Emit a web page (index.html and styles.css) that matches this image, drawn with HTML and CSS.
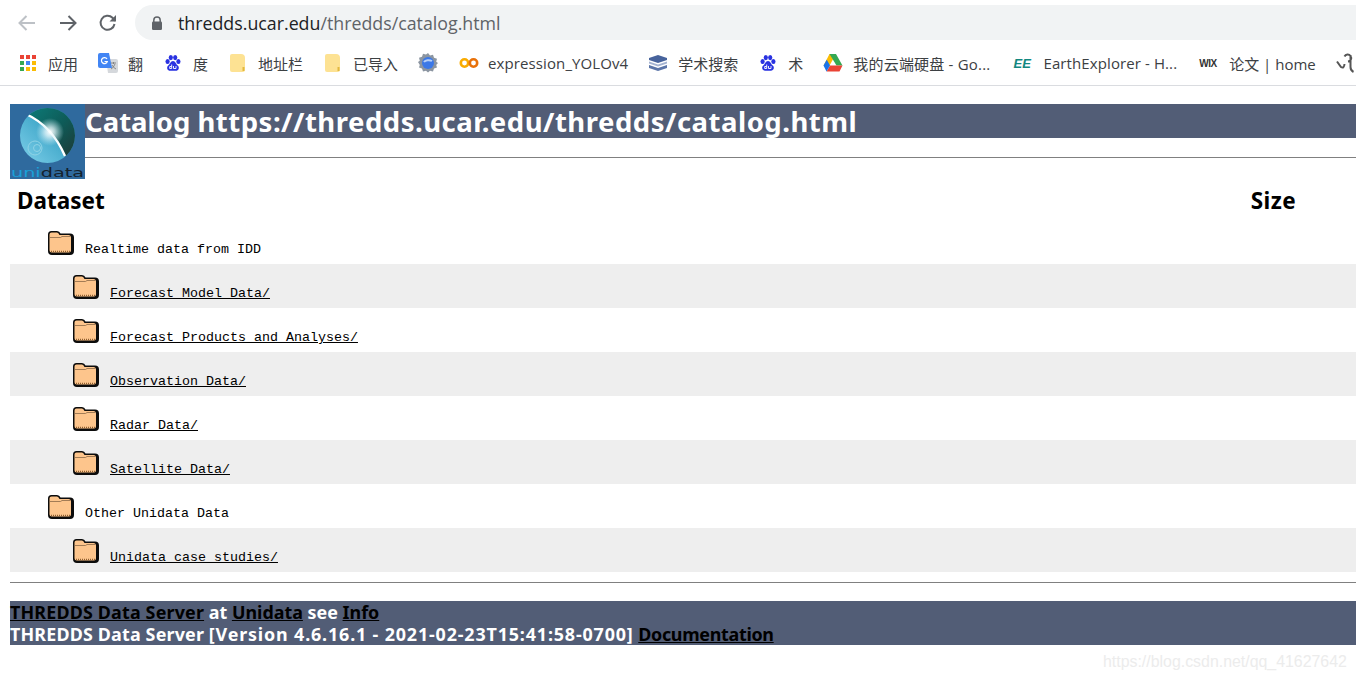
FILE: index.html
```html
<!DOCTYPE html>
<html lang="en">
<head>
<meta charset="utf-8">
<title>Catalog https://thredds.ucar.edu/thredds/catalog.html</title>
<link rel="stylesheet" href="styles.css">
</head>
<body>
<svg class="defs" width="0" height="0" aria-hidden="true">
  <defs>
    <symbol id="folder" viewBox="0 0 26 24">
      <path d="M0 7V3.500Q0 0 3.500 0H9Q11.500 0 12.500 2.500H22Q26 2.500 26 6.500V20Q26 24 22 24H4Q0 24 0 20Z" fill="#0c0c0c"/>
      <path d="M1.500 6.500V3.500Q1.500 1.500 3.500 1.500H9Q10.500 1.500 11.500 4H20.500Q23 4 23 6.500V19.500Q23 21.500 21 21.500H4Q1.500 21.500 1.500 19Z" fill="#fdc58c"/>
      <path d="M2 6.500H12.500L14 5.500H22.500" fill="none" stroke="#8c6a48" stroke-width=".8"/>
      <path d="M3 20.500H22" stroke="#8f5f30" stroke-width="1.500" stroke-dasharray="1 1"/>
    </symbol>
    <symbol id="paw" viewBox="0 0 16 16">
      <g fill="#2932e1">
        <ellipse cx="2.600" cy="6.500" rx="2.100" ry="2.600"/>
        <ellipse cx="5.800" cy="2.600" rx="2.100" ry="2.600"/>
        <ellipse cx="10.200" cy="2.600" rx="2.100" ry="2.600"/>
        <ellipse cx="13.400" cy="6.500" rx="2.100" ry="2.600"/>
        <path d="M8 6C10.500 6 10.800 9 12.800 10.500C15 12.500 13.500 16 10.500 15.800C9 15.600 7 15.600 5.500 15.800C2.500 16 1 12.500 3.200 10.500C5.200 9 5.500 6 8 6Z"/>
      </g>
      <path d="M6.700 9.500v4h-2v-2h2M8.500 11v2.500h2.500v-2.500" fill="none" stroke="#fff" stroke-width=".9"/>
    </symbol>
    <symbol id="file" viewBox="0 0 16 18">
      <path d="M0 2Q0 0 2 0H11Q15 0 15 4V15.500Q15 18 12.500 18H2Q0 18 0 16Z" fill="#fde293"/>
      <path d="M13.500 13v4" stroke="#e2b93f" stroke-width="2"/>
    </symbol>
  </defs>
</svg>

<header class="chrome">
  <div class="toolbar">
    <svg class="nav" viewBox="0 0 20 20"><path d="M18 10H3M9.500 3L2.500 10L9.500 17" fill="none" stroke="#bdc1c6" stroke-width="2"/></svg>
    <svg class="nav" viewBox="0 0 20 20"><path d="M2 10H17M10.500 3L17.500 10L10.500 17" fill="none" stroke="#5f6368" stroke-width="2"/></svg>
    <svg class="nav" viewBox="0 0 20 20"><path d="M16.500 11A7 7 0 1 1 14.500 4.800L17 7.800" fill="none" stroke="#5f6368" stroke-width="2"/><path d="M18 2V8.500H11.500Z" fill="#5f6368"/></svg>
    <div class="omnibox">
      <svg class="lock" viewBox="0 0 12 14"><path d="M2.800 6V4.200A3.200 3.200 0 0 1 9.200 4.200V6" fill="none" stroke="#5f6368" stroke-width="1.500"/><rect x="1" y="5.500" width="10" height="8.500" rx="1.200" fill="#5f6368"/></svg>
      <span class="url"><span class="host">thredds.ucar.edu</span>/thredds/catalog.html</span>
    </div>
  </div>
  <nav class="bookmarks">
    <a class="bm tight">
      <svg class="bi" viewBox="0 0 16 16"><g><rect x="0" y="0" width="4" height="4" fill="#ea4335"/><rect x="6" y="0" width="4" height="4" fill="#ea4335"/><rect x="12" y="0" width="4" height="4" fill="#ea4335"/><rect x="0" y="6" width="4" height="4" fill="#34a853"/><rect x="6" y="6" width="4" height="4" fill="#4285f4"/><rect x="12" y="6" width="4" height="4" fill="#fbbc04"/><rect x="0" y="12" width="4" height="4" fill="#34a853"/><rect x="6" y="12" width="4" height="4" fill="#fbbc04"/><rect x="12" y="12" width="4" height="4" fill="#fbbc04"/></g></svg>
      <span>应用</span>
    </a>
    <a class="bm bm-wide loose">
      <svg class="bi" viewBox="0 0 20 20"><path d="M8 6H18Q20 6 20 8V18Q20 20 18 20H10Z" fill="#d5d8dc"/><path d="M2 0H11L14 15H2Q0 15 0 13V2Q0 0 2 0Z" fill="#4285f4"/><path d="M9 6A3 3 0 1 0 9.300 8.500H6.500" fill="none" stroke="#fff" stroke-width="1.200"/><path d="M13 10h5M15.500 9v2M17 11q-1.500 4-4 5M14 12q1.500 3 4 4" fill="none" stroke="#777" stroke-width=".8"/></svg>
      <span>翻</span>
    </a>
    <a class="bm bm-tall loose"><svg class="bi"><use href="#paw"/></svg><span>度</span></a>
    <a class="bm bm-tall loose"><svg class="bi"><use href="#file"/></svg><span>地址栏</span></a>
    <a class="bm bm-tall tight"><svg class="bi"><use href="#file"/></svg><span>已导入</span></a>
    <a class="bm bm-wide">
      <svg class="bi" viewBox="0 0 20 20"><path d="M10 0l2 2.500 3-.8 1 3 3 1-.8 3 1.800 1.300-1.800 2 .8 2.500-3 1-1 3-3-.8-2 1.800-2-1.800-3 .8-1-3-3-1 .8-2.500L0 9l1.800-1.300L1 4.700l3-1 1-3 3 .8Z" fill="#8b95a1"/><circle cx="10" cy="10" r="6" fill="#3b78e7"/><path d="M6 9a5 3 0 0 1 8-1" stroke="#b7d0f7" stroke-width="2" fill="none"/></svg>
    </a>
    <a class="bm bm-colab latin">
      <svg class="bi" viewBox="0 0 20 12"><circle cx="5.500" cy="6" r="3.700" fill="none" stroke="#f9ab00" stroke-width="2.600"/><circle cx="14.500" cy="6" r="3.700" fill="none" stroke="#e8710a" stroke-width="2.600"/></svg>
      <span>expression_YOLOv4</span>
    </a>
    <a class="bm bm-stack loose">
      <svg class="bi" viewBox="0 0 18 16"><path d="M9 0L18 3V5L9 8L0 5V3Z" fill="#47639c"/><path d="M0 6.500L9 9.500L18 6.500V8.500L9 11.500L0 8.500Z" fill="#a5b4d2"/><path d="M0 10L9 13L18 10V13L9 16L0 13Z" fill="#5b75a8"/></svg>
      <span>学术搜索</span>
    </a>
    <a class="bm bm-tall tight"><svg class="bi"><use href="#paw"/></svg><span>术</span></a>
    <a class="bm bm-drive latin loose2">
      <svg class="bi" viewBox="0 0 20 18"><path d="M6.500 0H13L6.500 11.500H0.500Z" fill="#fbbc04"/><path d="M6.500 0H13L19.500 11.500H13.500Z" fill="#34a853"/><path d="M7 11.500H19.500L16.500 17.500H3.500Z" fill="#ea4335"/><path d="M0.500 11.500L3.500 17.500L7 11.500L3.800 5.800Z" fill="#1a73e8"/></svg>
      <span>我的云端硬盘 - Go...</span>
    </a>
    <a class="bm latin loose"><span class="ee">EE</span><span>EarthExplorer - H...</span></a>
    <a class="bm bm-wix tight"><span class="wix">WIX</span><span>论文 | home</span></a>
    <a class="bm bm-last">
      <svg class="bi" viewBox="0 0 18 20"><path d="M1 8.500L5 14Q8 16 8.500 11M8.500 3.500A3.500 3.500 0 1 1 12 8.500M14.500 2V14Q14.500 17.500 17.500 19" fill="none" stroke="#555" stroke-width="2"/></svg>
    </a>
  </nav>
</header>

<main class="page">
  <div class="head">
    <svg class="logo" viewBox="0 0 75 75">
      <defs>
        <linearGradient id="disc" x1="0" y1="1" x2="1" y2="0">
          <stop offset="0" stop-color="#7fd0ea"/>
          <stop offset=".6" stop-color="#3ea6c8"/>
          <stop offset="1" stop-color="#1b8fa6"/>
        </linearGradient>
        <linearGradient id="night" x1="0" y1="0" x2="1" y2="1">
          <stop offset="0" stop-color="#0c7f7c"/>
          <stop offset=".5" stop-color="#0e5b58"/>
          <stop offset="1" stop-color="#22302c"/>
        </linearGradient>
        <radialGradient id="flare">
          <stop offset="0" stop-color="#fff"/>
          <stop offset=".35" stop-color="#e6f6fa" stop-opacity=".75"/>
          <stop offset="1" stop-color="#bfe8f2" stop-opacity="0"/>
        </radialGradient>
        <clipPath id="disc-clip"><circle cx="37.500" cy="31.500" r="27.500"/></clipPath>
      </defs>
      <rect width="75" height="75" fill="#2f6a9e"/>
      <g clip-path="url(#disc-clip)">
        <rect x="10" y="4" width="55" height="55" fill="url(#disc)"/>
        <path d="M15 10Q42 22 56 53L70 60V0H15Z" fill="url(#night)"/>
        <path d="M16 10Q42 22 55 52" fill="none" stroke="#fff" stroke-width="2.400"/>
      </g>
      <circle cx="40" cy="28" r="14" fill="url(#flare)"/>
      <circle cx="25" cy="44" r="7" fill="none" stroke="#8fd3e6" stroke-width="1"/>
      <circle cx="27" cy="44" r="3.500" fill="none" stroke="#8fd3e6" stroke-width="1"/>
      <text class="logo-text" x="1" y="73" textLength="73" lengthAdjust="spacingAndGlyphs"><tspan class="uni">uni</tspan><tspan class="data">data</tspan></text>
    </svg>
    <div class="head-main">
      <h1>Catalog <span class="h1-url">https://thredds.ucar.edu/thredds/catalog.html</span></h1>
      <hr class="rule">
    </div>
  </div>

  <div class="table-head"><span>Dataset</span><span class="size">Size</span></div>

  <div class="row lvl1"><svg class="folder"><use href="#folder"/></svg><span class="name">Realtime data from IDD</span></div>
  <div class="row lvl2 alt"><svg class="folder"><use href="#folder"/></svg><a class="name link">Forecast Model Data/</a></div>
  <div class="row lvl2"><svg class="folder"><use href="#folder"/></svg><a class="name link">Forecast Products and Analyses/</a></div>
  <div class="row lvl2 alt"><svg class="folder"><use href="#folder"/></svg><a class="name link">Observation Data/</a></div>
  <div class="row lvl2"><svg class="folder"><use href="#folder"/></svg><a class="name link">Radar Data/</a></div>
  <div class="row lvl2 alt"><svg class="folder"><use href="#folder"/></svg><a class="name link">Satellite Data/</a></div>
  <div class="row lvl1"><svg class="folder"><use href="#folder"/></svg><span class="name">Other Unidata Data</span></div>
  <div class="row lvl2 alt"><svg class="folder"><use href="#folder"/></svg><a class="name link">Unidata case studies/</a></div>

  <hr class="rule foot-rule">

  <footer class="foot">
    <div><a class="tds">THREDDS Data Server</a> at <a>Unidata</a> see <a>Info</a></div>
    <div><span class="tds">THREDDS Data Server</span> <span class="ver">[Version 4.6.16.1 - 2021-02-23T15:41:58-0700]</span> <a class="docs">Documentation</a></div>
  </footer>
</main>
<div class="watermark">https://blog.csdn.net/qq_41627642</div>
</body>
</html>
```

FILE: styles.css
```css
* { box-sizing: border-box; }
html, body { margin: 0; padding: 0; height: 681px; overflow: hidden; background: #fff; }
body { font-family: "Open Sans", "Noto Sans CJK SC", sans-serif; color: #000; }
.defs { display: block; height: 0; }

.chrome { height: 86px; border-bottom: 1px solid #dadce0; overflow: hidden; }
.toolbar { display: flex; align-items: center; height: 45px; padding: 5px 0 5px 17px; }
.nav { width: 20px; height: 20px; flex: none; margin-right: 20.500px; }
.nav:nth-child(3) { margin-right: 17px; }
.omnibox { flex: 1; height: 35px; margin-right: -30px; background: #f1f3f4; border-radius: 18px; display: flex; align-items: center; padding-left: 16px; }
.lock { width: 12px; height: 14px; flex: none; margin-right: 15px; }
.url { font-size: 17.800px; color: #5f6368; white-space: nowrap; }
.host { color: #202124; }

.bookmarks { display: flex; align-items: center; gap: 21px; height: 36px; padding: 0 0 0 20px; white-space: nowrap; font-size: 15px; color: #3c4043; }
.bm { display: flex; align-items: center; gap: 12px; flex: none; }
.bi { width: 16px; height: 16px; flex: none; }
.tight { margin-right: -1px; }
.loose { margin-right: 1px; }
.loose2 { margin-right: 2px; }
.latin { letter-spacing: .1px; }
.bm-tall .bi { height: 18px; }
.bm-wide { gap: 10px; }
.bm-wide .bi { width: 20px; height: 20px; }
.bm-colab { gap: 9px; }
.bm-colab .bi { width: 20px; height: 12px; }
.bm-stack { gap: 11px; }
.bm-stack .bi { width: 18px; }
.bm-drive { gap: 10px; letter-spacing: .2px; }
.bm-drive .bi { width: 20px; height: 18px; }
.bm-last .bi { width: 18px; height: 20px; }
.ee { width: 18px; font: italic 700 13px "Liberation Sans", sans-serif; color: #12877f; }
.wix { width: 20px; font: 700 10px "Liberation Sans", sans-serif; color: #333; letter-spacing: -.5px; }
.bm-wix { gap: 10px; }

.page { padding: 18px 0 0 10px; font-family: "Noto Sans", sans-serif; }
.head { display: flex; height: 76px; }
.logo { width: 75px; height: 75px; flex: none; }
.logo-text { font: 400 12px "DejaVu Sans", sans-serif; }
.uni { fill: #1aa0d8; }
.data { fill: #14222e; }
.head-main { flex: 1; min-width: 0; }
h1 { margin: 0; height: 34px; line-height: 36px; font-size: 27.500px; font-weight: 700; color: #fff; background: #525d76; white-space: nowrap; }
.h1-url { letter-spacing: .5px; }
.rule { height: 1px; border: 0; margin: 19px 0 0; background: #808080; }

.table-head { display: flex; justify-content: space-between; align-items: center; height: 40px; padding: 0 60px 0 7px; font-size: 22.500px; font-weight: 700; }
.size { letter-spacing: .4px; }
.row { display: flex; height: 44px; padding-top: 11px; }
.alt { background: #eee; }
.lvl1 { padding-left: 38px; }
.lvl2 { padding-left: 63px; }
.folder { width: 26px; height: 24px; flex: none; margin-right: 11px; }
.name { font: 13.333px/16px "Liberation Mono", monospace; white-space: pre; color: #000; padding-top: 11px; height: 28px; }
.link { text-decoration: underline; }

.foot-rule { margin: 10px 0 0; }
.foot { margin-top: 18px; height: 44px; background: #525d76; color: #fff; font-size: 17.900px; font-weight: 700; line-height: 22px; white-space: nowrap; }
.foot a { color: #000; text-decoration: underline; }
.tds { letter-spacing: .17px; }
.ver { letter-spacing: .85px; }
.docs { letter-spacing: -.3px; }

.watermark { position: absolute; left: 1103px; top: 653px; font: 15.900px "Liberation Sans", sans-serif; color: #ececec; white-space: nowrap; }
```
